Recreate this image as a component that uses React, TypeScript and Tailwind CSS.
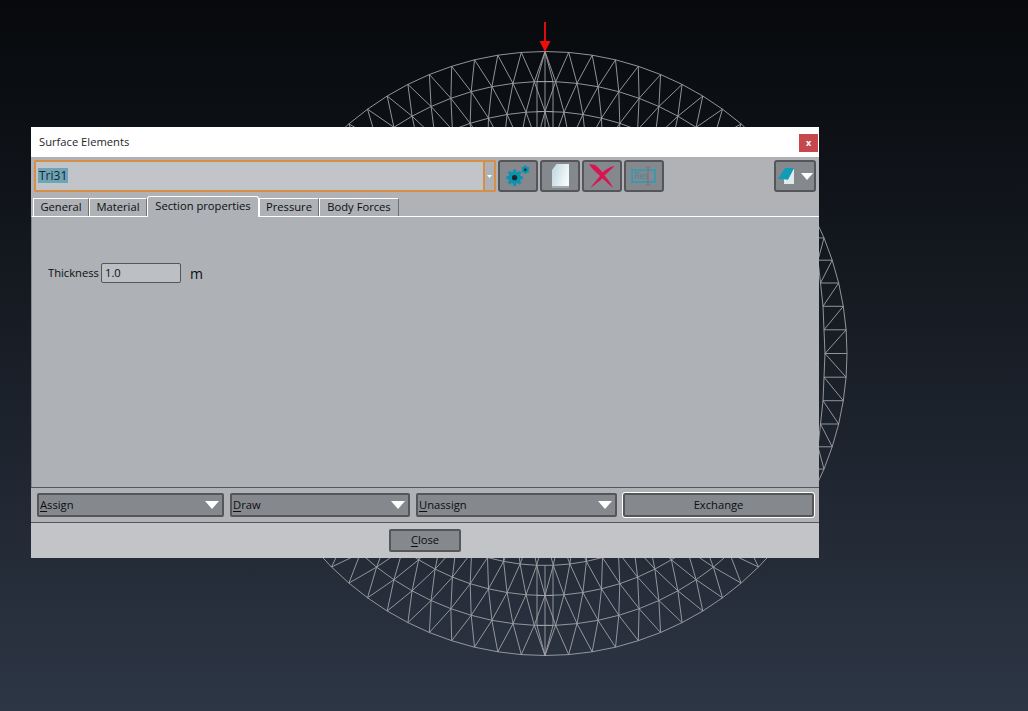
const CX = 545;
const CY = 353.5;
const STEP = (Math.PI * 2) / 80;

function pt(r: number, a: number): [number, number] {
  return [CX + r * Math.sin(a), CY - r * Math.cos(a)];
}

function meshPath(): string {
  const radii = [302, 272, 242, 212, 182];
  let d = "";
  const seg = (p: [number, number], q: [number, number]) => {
    d += `M${p[0].toFixed(1)} ${p[1].toFixed(1)}L${q[0].toFixed(1)} ${q[1].toFixed(1)}`;
  };
  const LOW = Math.PI * 0.375;
  const HIGH = Math.PI * 0.625;
  radii.forEach((r, ri) => {
    const off = ri % 2 === 0 ? 0 : STEP / 2;
    for (let i = 0; i < 80; i++) {
      const a = i * STEP + off;
      const side = a > LOW - 0.001 && a < HIGH + 0.001;
      if (!(ri === 1 && side)) seg(pt(r, a), pt(r, a + STEP));
      if (ri < radii.length - 1 && !(ri <= 1 && side)) {
        const r2 = radii[ri + 1];
        seg(pt(r, a), pt(r2, a - STEP / 2));
        seg(pt(r, a), pt(r2, a + STEP / 2));
      }
    }
  });
  // the band on the right: quads split by one diagonal that mirrors about the equator
  const inner = [825, 824, 823, 820.5, 818, 814];
  for (let k = -5; k <= 5; k++) {
    const outerP = pt(302, Math.PI / 2 + k * STEP);
    const ix = inner[Math.abs(k)];
    seg(outerP, [ix, outerP[1]]);
    if (k < 5) {
      const next = pt(302, Math.PI / 2 + (k + 1) * STEP);
      seg([ix, outerP[1]], [inner[Math.abs(k + 1)], next[1]]);
      if (k < 0) seg(outerP, [inner[Math.abs(k + 1)], next[1]]);
      else seg(next, [ix, outerP[1]]);
    }
  }
  // converging lines at the two poles
  [-1, 1].forEach((s) => {
    [-8, 0, 8].forEach((dx) => {
      seg([CX, CY - s * 302], [CX + dx, CY - s * 272]);
      seg([CX + dx, CY - s * 272], [CX + dx, CY - s * 212]);
    });
    seg([CX - 8, CY - s * 272], [CX + 8, CY - s * 272]);
    seg([CX - 8, CY - s * 242], [CX + 8, CY - s * 242]);
  });
  return d;
}

function Caret({ className }: { className: string }) {
  return (
    <svg viewBox="0 0 14 8" className={className}>
      <path d="M0 0H14L7 8Z" fill="#ffffff" />
    </svg>
  );
}

function Under({ c, rest }: { c: string; rest: string }) {
  return (
    <span>
      <span className="underline underline-offset-2">{c}</span>
      {rest}
    </span>
  );
}

function Menu({ c, rest, w }: { c: string; rest: string; w: string }) {
  return (
    <div className={`${w} h-[24px] flex items-center justify-between pl-[1px] pr-[3px] bg-[#85888c] border-2 border-[#54565a] rounded-[2px]`}>
      <Under c={c} rest={rest} />
      <Caret className="w-[14px] h-[8px]" />
    </div>
  );
}

function IconBtn({ children, w = "w-[40px]" }: { children: React.ReactNode; w?: string }) {
  return (
    <div className={`${w} h-[32px] flex items-center justify-center bg-[#85888c] border-2 border-[#54565a] rounded-[3px]`}>
      {children}
    </div>
  );
}

function Tab({ label, active, w }: { label: string; active?: boolean; w: string }) {
  return (
    <div
      className={
        active
          ? `${w} h-[21px] -mb-px z-10 flex items-start justify-center pt-[1px] bg-[#aeb1b5] border border-b-0 border-white rounded-t-[3px]`
          : `${w} h-[18px] flex items-start justify-center bg-[#aeb1b5] border-t border-l border-t-white border-l-white border-r border-r-[#6e7074]`
      }
    >
      {label}
    </div>
  );
}

export default function App() {
  return (
    <div
      className="relative w-[1028px] h-[711px] overflow-hidden bg-gradient-to-b from-[#07090c] to-[#2d3645] text-[11.2px] text-[#0d0e10]"
      style={{ fontFamily: '"Open Sans", "Noto Sans", sans-serif' }}
    >
      <svg className="absolute inset-0" width={1028} height={711}>
        <path d={meshPath()} stroke="#a0a2a5" strokeWidth={0.9} fill="none" />
        <path d="M545 22V42" stroke="#e00b0b" strokeWidth={2} />
        <path d="M539.5 41H550.5L545 52Z" fill="#f00c0c" />
      </svg>

      <div className="absolute left-[31px] top-[127px] w-[788px] h-[431px] flex flex-col bg-[#b0b2b6]">
        {/* title bar */}
        <div className="h-[30px] flex items-center justify-between bg-white pl-[8px] pr-[1px]">
          <span className="text-[#26272a]">Surface Elements</span>
          <div className="w-[19px] h-[18px] flex items-center justify-center bg-[#c7484c] text-white text-[9px] font-bold leading-none mt-[1px]">
            x
          </div>
        </div>

        {/* toolbar */}
        <div className="h-[39px] flex items-start pt-[3px] px-[3px]">
          <div className="w-[451px] h-[32px] flex items-center pl-[2px] bg-[#c1c4c9] border-2 border-[#d68f46] rounded-l-[2px]">
            <span className="bg-[#6fa4b7] text-[#15232b] text-[12px] leading-[15px] px-px mb-[1px]">Tri31</span>
          </div>
          <div className="w-[11px] h-[32px] flex items-center justify-center bg-[#aeb1b5] border-2 border-l-0 border-[#d68f46] rounded-r-[2px]">
            <Caret className="w-[5px] h-[3px]" />
          </div>
          <div className="ml-[2px] flex gap-[2px]">
            <IconBtn>
              <svg width="28" height="24" viewBox="0 0 28 24">
                <g fill="#0c93ae">
                  <circle cx="10.6" cy="13.7" r="6.2" />
                  {[0, 45, 90, 135, 180, 225, 270, 315].map((a) => (
                    <rect key={a} x="9" y="5.5" width="3.2" height="3" transform={`rotate(${a} 10.6 13.7)`} />
                  ))}
                  <circle cx="21.3" cy="5.7" r="3.4" />
                  {[0, 60, 120, 180, 240, 300].map((a) => (
                    <rect key={a} x="20.5" y="1.4" width="1.6" height="1.6" transform={`rotate(${a} 21.3 5.7)`} />
                  ))}
                </g>
                <circle cx="10.6" cy="13.7" r="2.6" fill="#1d2630" />
                <circle cx="21.3" cy="5.7" r="1.3" fill="#1d2630" />
              </svg>
            </IconBtn>
            <IconBtn>
              <svg width="18" height="24" viewBox="0 0 18 24">
                <defs>
                  <linearGradient id="sheet" x1="0" y1="0" x2="1" y2="0.4">
                    <stop offset="0" stopColor="#bcd5df" />
                    <stop offset="1" stopColor="#f4f9fa" />
                  </linearGradient>
                </defs>
                <path d="M1 6L5.5 0H18V22H1Z" fill="url(#sheet)" />
                <path d="M1 22H18V24H1Z" fill="#a4abae" />
              </svg>
            </IconBtn>
            <IconBtn>
              <svg width="26" height="24" viewBox="0 0 26 24">
                <path d="M0 0L6 1C9 3 11.5 6 13.5 8.5C16 6 20 3 25.5 2C22 6 18 9 15.5 11.5C18.5 15 22 19 24 24C20 20.5 16.5 17 13.5 14.5C10 17.5 6 20.5 1.5 24C4.5 19.5 8 15.5 11 12C7 8.5 3 5 0 0Z" fill="#da1450" />
              </svg>
            </IconBtn>
            <IconBtn>
              <svg width="26" height="20" viewBox="0 0 26 20">
                <rect x="1" y="4" width="23" height="12" fill="none" stroke="#17a2bf" strokeWidth="1.3" />
                <path d="M15 1H19M17 1V19M15 19H19" stroke="#7d7074" strokeWidth="1" fill="none" />
                <text x="3" y="13" fontSize="8.5" fill="#3f8ba0" fontFamily="Open Sans, sans-serif">Res</text>
              </svg>
            </IconBtn>
          </div>
          <div className="ml-auto w-[42px] h-[32px] flex items-center justify-between pl-[2px] pr-[1px] bg-[#85888c] border-2 border-[#54565a] rounded-[3px]">
            <svg width="16" height="16" viewBox="0 0 16 16">
              <path d="M10 11.5L16 0V16H6V11Z" fill="#dfeaf0" />
              <path d="M0 11L7 0H16L10 11.5Z" fill="#0e9cb6" />
            </svg>
            <Caret className="w-[12px] h-[7px]" />
          </div>
        </div>

        {/* tabs */}
        <div className="h-[20px] flex items-end pl-[2px]">
          <Tab label="General" w="w-[56px]" />
          <Tab label="Material" w="w-[58px]" />
          <Tab label="Section properties" active w="w-[112px]" />
          <Tab label="Pressure" w="w-[60px]" />
          <Tab label="Body Forces" w="w-[80px]" />
        </div>

        {/* page */}
        <div className="flex-1 border-t border-white bg-[#aeb1b5] border-l border-l-[#85888c] pl-[16px] pt-[45px]">
          <div className="flex items-center">
            <span className="w-[53px] pt-[1px]">Thickness</span>
            <div className="w-[80px] h-[20px] pl-[3px] pt-[1px] flex items-center bg-[#bcbfc3] border border-[#54565a] rounded-[2px]">1.0</div>
            <span className="ml-[9px] pt-[1px] text-[14px]">m</span>
          </div>
        </div>

        {/* actions */}
        <div className="h-[36px] flex items-center gap-[6px] pl-[6px] pr-[5px] bg-[#b0b2b6] border-y border-[#54565a]">
          <Menu c="A" rest="ssign" w="w-[187px]" />
          <Menu c="D" rest="raw" w="w-[180px]" />
          <Menu c="U" rest="nassign" w="w-[201px]" />
          <div className="flex-1 h-[24px] flex items-center justify-center bg-[#85888c] border-2 border-[#54565a] outline outline-1 outline-white rounded-[2px]">
            Exchange
          </div>
        </div>

        {/* footer */}
        <div className="h-[35px] flex items-center justify-center bg-[#c2c4c7]">
          <div className="w-[72px] h-[23px] flex items-center justify-center bg-[#85888c] border-2 border-[#54565a] rounded-[2px]">
            <Under c="C" rest="lose" />
          </div>
        </div>
      </div>
    </div>
  );
}
